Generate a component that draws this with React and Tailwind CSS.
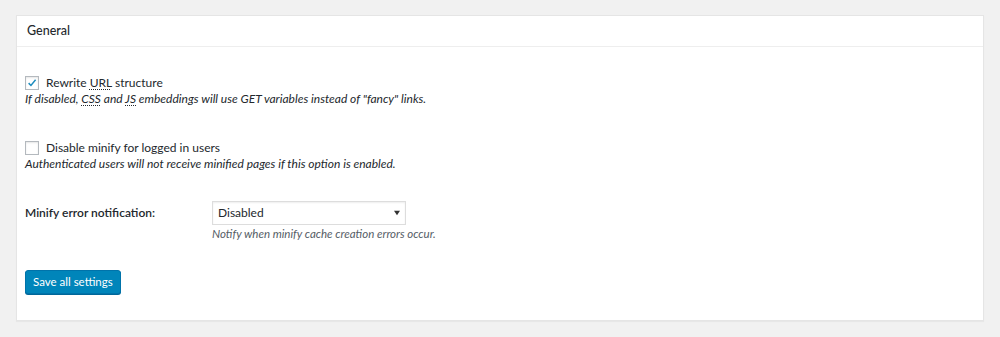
import React from "react";

function Abbr({ children }) {
  return (
    <span className="underline decoration-dotted decoration-1 underline-offset-2">{children}</span>
  );
}

export default function App() {
  return (
    <div
      className="w-[1000px] h-[337px] bg-[#f1f1f1] pt-[15px] pl-[16px] text-[#23282d]"
      style={{ fontFamily: 'Lato, "Noto Sans", sans-serif' }}
    >
      <div className="w-[968px] h-[306px] bg-white border border-[#e5e5e5] shadow-[0_1px_1px_rgba(0,0,0,0.04)]">
        <div className="h-[31px] border-b border-[#eee] px-[10px] flex items-center">
          <span className="text-[12.5px] font-medium text-[#23282d]">General</span>
        </div>
        <div className="px-[8px] pt-[29px]">
          <div className="flex items-center h-[14px]">
            <span className="w-[14px] h-[14px] border border-[#b4b9be] bg-white shadow-[inset_0_1px_2px_rgba(0,0,0,0.1)] flex items-center justify-center">
              <svg viewBox="0 0 16 16" className="w-[14px] h-[14px]">
                <path d="M3.5 8.2 L6.6 11.3 L12.8 3.8" fill="none" stroke="#1e8cbe" strokeWidth="2" />
              </svg>
            </span>
            <span className="ml-[7px] text-[12px] leading-none">
              Rewrite <Abbr>URL</Abbr> structure
            </span>
          </div>
          <div className="mt-[1px] text-[12px] italic leading-[15px] text-[#23282d]">
            If disabled, <Abbr>CSS</Abbr> and <Abbr>JS</Abbr> embeddings will use GET variables instead of "fancy" links.
          </div>

          <div className="flex items-center h-[14px] mt-[35px]">
            <span className="w-[14px] h-[14px] border border-[#b4b9be] bg-white shadow-[inset_0_1px_2px_rgba(0,0,0,0.1)]"></span>
            <span className="ml-[7px] text-[12px] leading-none">Disable minify for logged in users</span>
          </div>
          <div className="mt-[1px] text-[12px] italic leading-[15px]">
            Authenticated users will not receive minified pages if this option is enabled.
          </div>

          <div className="flex mt-[30px]">
            <div className="w-[187px] pt-[4px] text-[12px] font-semibold leading-[16px]">Minify error notification:</div>
            <div>
              <div className="w-[194px] h-[24px] border border-[#ddd] shadow-[inset_0_1px_2px_rgba(0,0,0,0.07)] flex items-center justify-between pl-[5px] pr-[5px] text-[12px]">
                <span>Disabled</span>
                <svg viewBox="0 0 8 8" className="w-[6px] h-[6px]"><path d="M0 1 L8 1 L4 7 Z" fill="#333" /></svg>
              </div>
              <div className="mt-[1px] text-[11.5px] italic text-[#555d66] leading-[15px]">
                Notify when minify cache creation errors occur.
              </div>
            </div>
          </div>

          <div className="mt-[29px] flex">
            <button className="h-[24px] px-[7px] rounded-[3px] bg-[#0085ba] border border-[#0073aa] text-white text-[11.5px] leading-none shadow-[0_1px_0_#006799]">
              Save all settings
            </button>
          </div>
        </div>
      </div>
    </div>
  );
}
